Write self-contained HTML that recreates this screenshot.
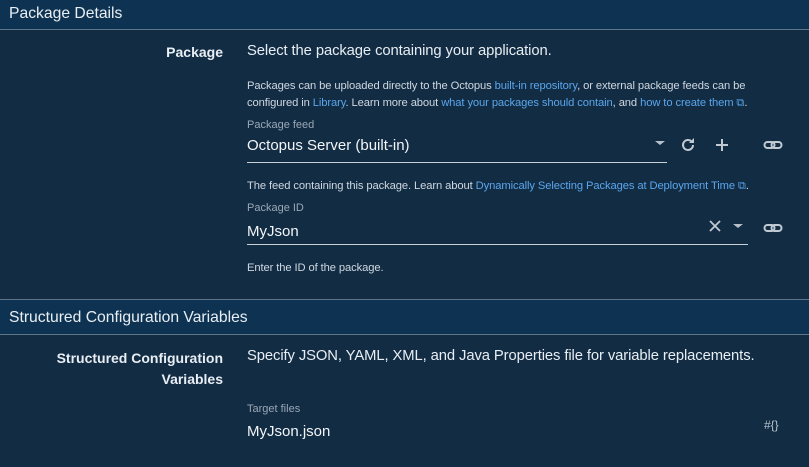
<!DOCTYPE html>
<html><head><meta charset="utf-8"><style>
*{margin:0;padding:0;box-sizing:border-box}
body{width:809px;height:467px;background:#122c44;font-family:"Liberation Sans",sans-serif;color:#fff;position:relative;overflow:hidden}
.a{position:absolute;white-space:nowrap}
.hdr{position:absolute;left:0;width:809px;background:#0e3352;border-bottom:1px solid #5f7589}
.hdr span{position:absolute;left:9px;font-size:15.7px;color:#e8eef3}
.lbl{font-weight:bold;font-size:14px;color:#e8eef3;text-align:right;right:586px}
.t{font-size:14.8px;color:#e8eef3;letter-spacing:-0.1px}
.h{font-size:11.2px;color:#cfd8e0;letter-spacing:-0.1px}
.s{font-size:11px;color:#9aa8b5}
.v{font-size:15px;color:#f2f5f7}
a{color:#5aa6ec;text-decoration:none}
.ul{position:absolute;height:1px;background:#c8d0d8}
.ico{position:absolute}
</style></head><body>
<div class="hdr" style="top:0;height:30px"><span style="top:5px">Package Details</span></div>
<div class="a lbl" style="top:44px">Package</div>
<div class="a t" style="left:247px;top:43px">Select the package containing your application.</div>
<div class="a h" style="left:247px;top:80px">Packages can be uploaded directly to the Octopus <a>built-in repository</a>, or external package feeds can be</div>
<div class="a h" style="left:247px;top:97px">configured in <a>Library</a>. Learn more about <a>what your packages should contain</a>, and <a>how to create them ⧉</a>.</div>
<div class="a s" style="left:247px;top:119px">Package feed</div>
<div class="a v" style="left:247px;top:137px">Octopus Server (built-in)</div>
<div class="ul" style="left:247px;top:162px;width:420px"></div>
<svg class="ico" style="left:654px;top:140px" width="12" height="6"><path d="M1 1h10L6 5z" fill="#b5c0ca"/></svg>
<svg class="ico" style="left:679px;top:136px" width="18" height="18" viewBox="0 0 18 18"><path d="M14 9a5 5 0 1 1-1.5-3.6" fill="none" stroke="#c0cad3" stroke-width="2"/><path d="M15 2v5h-5z" fill="#c0cad3"/></svg>
<svg class="ico" style="left:714px;top:137px" width="16" height="16"><path d="M8 2v12M2 8h12" stroke="#c0cad3" stroke-width="2"/></svg>
<svg class="ico" style="left:763px;top:139px" width="20" height="12"><rect x="1.5" y="3" width="10" height="6" rx="3" fill="none" stroke="#c0cad3" stroke-width="2"/><rect x="8.5" y="3" width="10" height="6" rx="3" fill="none" stroke="#c0cad3" stroke-width="2"/></svg>
<div class="a h" style="left:247px;top:180px">The feed containing this package. Learn about <a>Dynamically Selecting Packages at Deployment Time ⧉</a>.</div>
<div class="a s" style="left:247px;top:202px">Package ID</div>
<div class="a v" style="left:247px;top:223px">MyJson</div>
<div class="ul" style="left:247px;top:244px;width:501px"></div>
<svg class="ico" style="left:708px;top:219px" width="14" height="14"><path d="M2 2l10 10M12 2L2 12" stroke="#c0cad3" stroke-width="1.8"/></svg>
<svg class="ico" style="left:732px;top:223px" width="12" height="6"><path d="M1 1h10L6 5z" fill="#b5c0ca"/></svg>
<svg class="ico" style="left:763px;top:222px" width="20" height="12"><rect x="1.5" y="3" width="10" height="6" rx="3" fill="none" stroke="#c0cad3" stroke-width="2"/><rect x="8.5" y="3" width="10" height="6" rx="3" fill="none" stroke="#c0cad3" stroke-width="2"/></svg>
<div class="a h" style="left:247px;top:262px">Enter the ID of the package.</div>
<div style="position:absolute;left:0;top:299px;width:809px;height:1px;background:#5f7589"></div>
<div class="hdr" style="top:300px;height:35px"><span style="top:9px">Structured Configuration Variables</span></div>
<div class="a lbl" style="top:348px;line-height:21px">Structured Configuration<br>Variables</div>
<div class="a t" style="left:247px;top:348px">Specify JSON, YAML, XML, and Java Properties file for variable replacements.</div>
<div class="a s" style="left:247px;top:403px">Target files</div>
<div class="a v" style="left:247px;top:423px">MyJson.json</div>
<div class="a" style="left:764px;top:418px;font-size:12px;color:#b5c0ca">#{}</div>
</body></html>
